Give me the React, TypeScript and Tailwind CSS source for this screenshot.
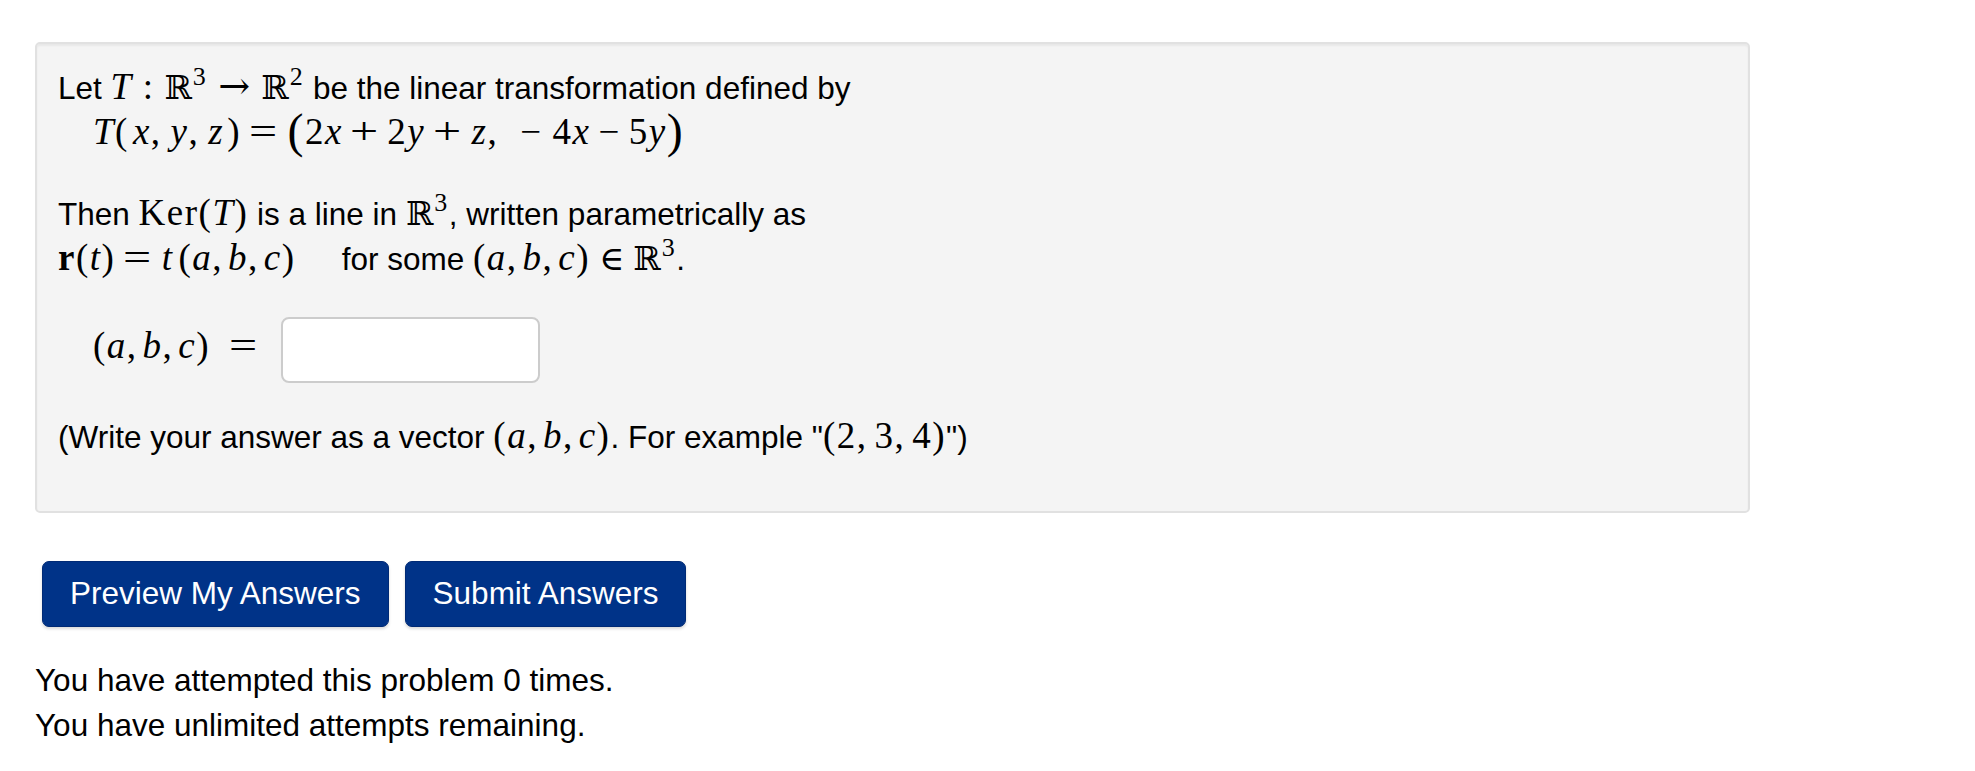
import React from 'react';

const serif = "font-['Liberation_Serif','DejaVu_Serif',serif]";
const dbl = "font-['DejaVu_Serif','DejaVu_Sans',serif]";

const M: React.FC<{ children: React.ReactNode; className?: string }> = ({ children, className = '' }) => (
  <span className={`${serif} text-[37px] leading-none tracking-[1.5px] whitespace-nowrap ${className}`}>{children}</span>
);

const V: React.FC<{ children: React.ReactNode; className?: string }> = ({ children, className = '' }) => (
  <span className={`italic ${className}`}>{children}</span>
);

const R = () => <span className={`${dbl} text-[33px] leading-[0] tracking-normal`}>ℝ</span>;

const Sup: React.FC<{ children: React.ReactNode }> = ({ children }) => (
  <span className="relative -top-[14px] ml-[1px] text-[26px] leading-[0]">{children}</span>
);

const Big: React.FC<{ children: React.ReactNode; className?: string }> = ({ children, className = '' }) => (
  <span className={`relative top-[3px] text-[48px] leading-[0] ${className}`}>{children}</span>
);

// wide operator glyph (=, +) like the TeX ones
const Op: React.FC<{ children: React.ReactNode; className?: string }> = ({ children, className = '' }) => (
  <span className={`inline-block scale-x-[1.35] ${className}`}>{children}</span>
);

// (a, b, c)
const Abc = () => (
  <>
    (<V>a</V>,<V className="ml-[5px]">b</V>,<V className="ml-[5px]">c</V>)
  </>
);

export default function App() {
  return (
    <div className="min-h-screen bg-white pl-[35px] pt-[42px] font-['Liberation_Sans',Arial,sans-serif] text-[31.5px] leading-[45px] text-black">
      <div className="w-[1715px] rounded-[5px] border-2 border-[#e1e1e1] bg-[#f4f4f4] px-[21px] pb-[51px] pt-[22px] shadow-[inset_0_2px_2px_rgba(0,0,0,0.05)]">
        <div>
          Let{' '}
          <M>
            <V>T</V>
            <span className="mx-[10px]">:</span>
            <R />
            <Sup>3</Sup>
            <span className={`${dbl} mx-[11px] text-[38px] font-extralight tracking-normal`}>→</span>
            <R />
            <Sup>2</Sup>
          </M>{' '}
          be the linear transformation defined by
        </div>
        <div className="pl-[35px]">
          <M>
            <V>T</V>(<V className="ml-[4px]">x</V>,<V className="ml-[9px]">y</V>,<V className="ml-[9px]">z</V>
            <span className="ml-[3px]">)</span>
            <Op className="mx-[12px]">=</Op>
            <Big>(</Big>2<V>x</V>
            <Op className="mx-[11px]">+</Op>2<V>y</V>
            <Op className="mx-[12px]">+</Op>
            <V>z</V>,<span className="ml-[22px] mr-[10px]">−</span>4<V>x</V>
            <span className="mx-[8px]">−</span>5<V>y</V>
            <Big>)</Big>
          </M>
        </div>

        <div className="mt-[36px]">
          Then{' '}
          <M>
            Ker(<V>T</V>)
          </M>{' '}
          is a line in{' '}
          <M>
            <R />
            <Sup>3</Sup>
          </M>
          , written parametrically as
        </div>
        <div>
          <M>
            <span className="font-bold">r</span>(<V>t</V>)<Op className="mx-[12px]">=</Op>
            <V className="mr-[5px]">t</V>
            <Abc />
          </M>
          <span className="ml-[46px]">for some </span>
          <M>
            <Abc />
            <span className={`${dbl} mx-[9px] text-[34px] font-extralight tracking-normal`}>∈</span>
            <R />
            <Sup>3</Sup>
          </M>
          .
        </div>

        <div className="mt-[35px] flex items-start pl-[35px]">
          <div className="mt-[10px] flex">
            <M>
              <Abc />
            </M>
            <M className="ml-[23px]">
              <Op>=</Op>
            </M>
          </div>
          <input
            type="text"
            className="ml-[26px] h-[66px] w-[259px] rounded-[8px] border-2 border-[#cccccc] bg-white px-3 outline-none"
          />
        </div>

        <div className="mt-[31.5px]">
          (Write your answer as a vector{' '}
          <M>
            <Abc />
          </M>
          . For example "
          <M>
            (2,<span className="ml-[7px]">3</span>,<span className="ml-[7px]">4</span>)
          </M>
          ")
        </div>
      </div>

      <div className="mt-[48px] flex gap-[16px] pl-[7px]">
        <button className="h-[66px] rounded-[7px] border border-[#002a75] bg-[#003388] px-[27px] leading-[45px] text-white shadow-[0_2px_3px_rgba(0,0,0,0.15)]">
          Preview My Answers
        </button>
        <button className="h-[66px] rounded-[7px] border border-[#002a75] bg-[#003388] px-[27px] leading-[45px] text-white shadow-[0_2px_3px_rgba(0,0,0,0.15)]">
          Submit Answers
        </button>
      </div>

      <div className="mt-[31.5px]">
        <div>You have attempted this problem 0 times.</div>
        <div>You have unlimited attempts remaining.</div>
      </div>
    </div>
  );
}
